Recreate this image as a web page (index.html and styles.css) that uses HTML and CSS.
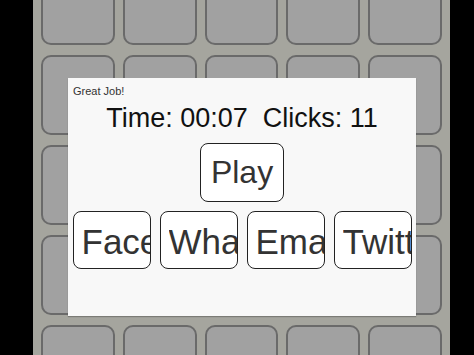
FILE: index.html
```html
<!DOCTYPE html>
<html>
<head>
<meta charset="utf-8">
<link rel="stylesheet" href="styles.css">
</head>
<body>
<div class="stage">
  <div class="board">
    <div class="tile"></div><div class="tile"></div><div class="tile"></div><div class="tile"></div><div class="tile"></div>
    <div class="tile"></div><div class="tile"></div><div class="tile"></div><div class="tile"></div><div class="tile"></div>
    <div class="tile"></div><div class="tile"></div><div class="tile"></div><div class="tile"></div><div class="tile"></div>
    <div class="tile"></div><div class="tile"></div><div class="tile"></div><div class="tile"></div><div class="tile"></div>
    <div class="tile"></div><div class="tile"></div><div class="tile"></div><div class="tile"></div><div class="tile"></div>
  </div>
  <div class="dialog">
    <div class="caption">Great Job!</div>
    <div class="score">Time: 00:07&nbsp; Clicks: 11</div>
    <div class="play-row"><div class="btn play">Play</div></div>
    <div class="share-row">
      <div class="btn share"><span class="label">Facebook</span></div>
      <div class="btn share"><span class="label">WhatsApp</span></div>
      <div class="btn share"><span class="label">Email</span></div>
      <div class="btn share"><span class="label">Twitter</span></div>
    </div>
  </div>
</div>
</body>
</html>
```
FILE: styles.css
```css
html, body {
  margin: 0;
  padding: 0;
  background: #000;
  height: 355px;
  overflow: hidden;
}
.stage {
  position: relative;
  margin-left: 33px;
  width: 417px;
  height: 355px;
  overflow: hidden;
  background: #a5a59e;
  font-family: "Liberation Sans", Arial, sans-serif;
}
.board {
  display: grid;
  grid-template-columns: repeat(5, 1fr);
  grid-auto-rows: 80px;
  gap: 10px 8px;
  padding: 0 8px;
  margin-top: -35px;
}
.tile {
  background: #a1a1a1;
  border: 2px solid #6a6a6a;
  border-radius: 10px;
  box-sizing: border-box;
}
.dialog {
  position: absolute;
  left: 35px;
  top: 78px;
  width: 348px;
  height: 238px;
  background: #f8f8f8;
  box-shadow: 0 1px 1px rgba(0,0,0,0.25);
  box-sizing: border-box;
  padding-top: 7px;
}
.caption {
  font-size: 11px;
  line-height: 13px;
  color: #333;
  padding-left: 5px;
}
.score {
  margin-top: 4px;
  font-size: 27px;
  line-height: 32px;
  color: #111;
  text-align: center;
}
.play-row {
  display: flex;
  justify-content: center;
  margin-top: 9px;
}
.btn {
  box-sizing: border-box;
  background: #fff;
  border: 1.5px solid #222;
  border-radius: 8px;
  color: #333;
  display: flex;
  align-items: center;
  white-space: nowrap;
  overflow: hidden;
}
.play {
  height: 59px;
  padding: 0 10px;
  font-size: 32px;
}
.share-row {
  display: grid;
  grid-template-columns: repeat(4, 78px);
  gap: 9px;
  justify-content: center;
  margin-top: 9px;
}
.share {
  height: 58px;
  padding: 3px 0 0 8px;
  font-size: 35px;
}
.label {
  display: block;
  overflow: hidden;
  min-width: 0;
  flex: 1 1 auto;
}
```
